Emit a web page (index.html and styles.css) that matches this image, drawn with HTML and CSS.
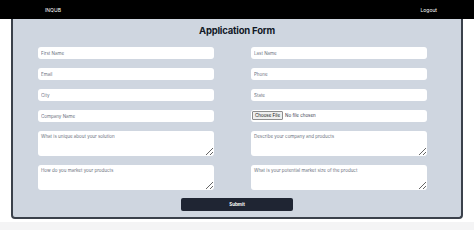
FILE: index.html
```html
<!DOCTYPE html>
<html lang="en">
<head>
    <meta charset="UTF-8">
    <meta name="viewport" content="width=device-width, initial-scale=1.0">
    <title>INQUB - Application Form</title>
    <link rel="stylesheet" href="styles.css">
</head>
<body>
    <nav class="navbar">
        <span class="brand">INQUB</span>
        <a class="logout" href="#">Logout</a>
    </nav>

    <main class="form-card">
        <h1>Application Form</h1>
        <form class="app-form">
            <div class="form-grid">
                <input type="text" placeholder="First Name">
                <input type="text" placeholder="Last Name">
                <input type="email" placeholder="Email">
                <input type="tel" placeholder="Phone">
                <input type="text" placeholder="City">
                <input type="text" placeholder="State">
                <input type="text" placeholder="Company Name">
                <input type="file" class="file-input">
                <textarea placeholder="What is unique about your solution"></textarea>
                <textarea placeholder="Describe your company and products"></textarea>
                <textarea placeholder="How do you market your products"></textarea>
                <textarea placeholder="What is your potential market size of the product"></textarea>
            </div>
            <button type="submit" class="submit-btn">Submit</button>
        </form>
    </main>

    <footer class="footer"></footer>
</body>
</html>
```

FILE: styles.css
```css
body {
    margin: 0;
    font-family: Inter, 'Liberation Sans', sans-serif;
    background: #fff;
}
.navbar {
    height: 19px;
    background: #000;
    display: flex;
    align-items: center;
    justify-content: space-between;
    padding: 0 37px 0 45px;
    font-size: 5px;
    color: #fff;
}
.logout {
    color: #fff;
    text-decoration: none;
}
.form-card {
    margin: 0 11px;
    padding: 5px 0 6px;
    background: #cfd6e0;
    border: 2px solid #3b414b;
    border-top: none;
    border-radius: 0 0 4px 4px;
}
.form-card h1 {
    margin: 0;
    font-size: 9.5px;
    line-height: 13px;
    font-weight: 700;
    letter-spacing: -0.2px;
    text-align: center;
    color: #111827;
}
.form-grid {
    display: grid;
    grid-template-columns: 176px 176px;
    column-gap: 37px;
    row-gap: 9px;
    padding-left: 25px;
    margin-top: 10px;
}
.form-grid input,
.form-grid textarea {
    box-sizing: border-box;
    width: 100%;
    height: 12px;
    margin: 0;
    padding: 0 3px;
    border: none;
    border-radius: 3px;
    background: #fff;
    font-family: inherit;
    font-size: 4.5px;
    color: #374151;
    outline: none;
}
.form-grid textarea {
    height: 25px;
    padding: 3px;
    resize: vertical;
}
.form-grid ::placeholder {
    color: #6b7280;
}
.form-grid .file-input {
    padding: 0 1px;
    line-height: 12px;
    font-size: 4.5px;
}
.file-input::file-selector-button {
    height: 9px;
    margin: 0 2px 0 0;
    padding: 0 2px;
    border: 1px solid #8d8d8d;
    border-radius: 1px;
    background: #efefef;
    font-family: inherit;
    font-size: 4.5px;
    color: #111;
}
.submit-btn {
    display: block;
    width: 112px;
    height: 13px;
    margin: 8px auto 0;
    padding: 0;
    border: none;
    border-radius: 2px;
    background: #1f2533;
    color: #fff;
    font-family: inherit;
    font-size: 4.5px;
    font-weight: 700;
    cursor: pointer;
}
.footer {
    margin-top: 3px;
    height: 10px;
    background: #f4f4f5;
}
```
